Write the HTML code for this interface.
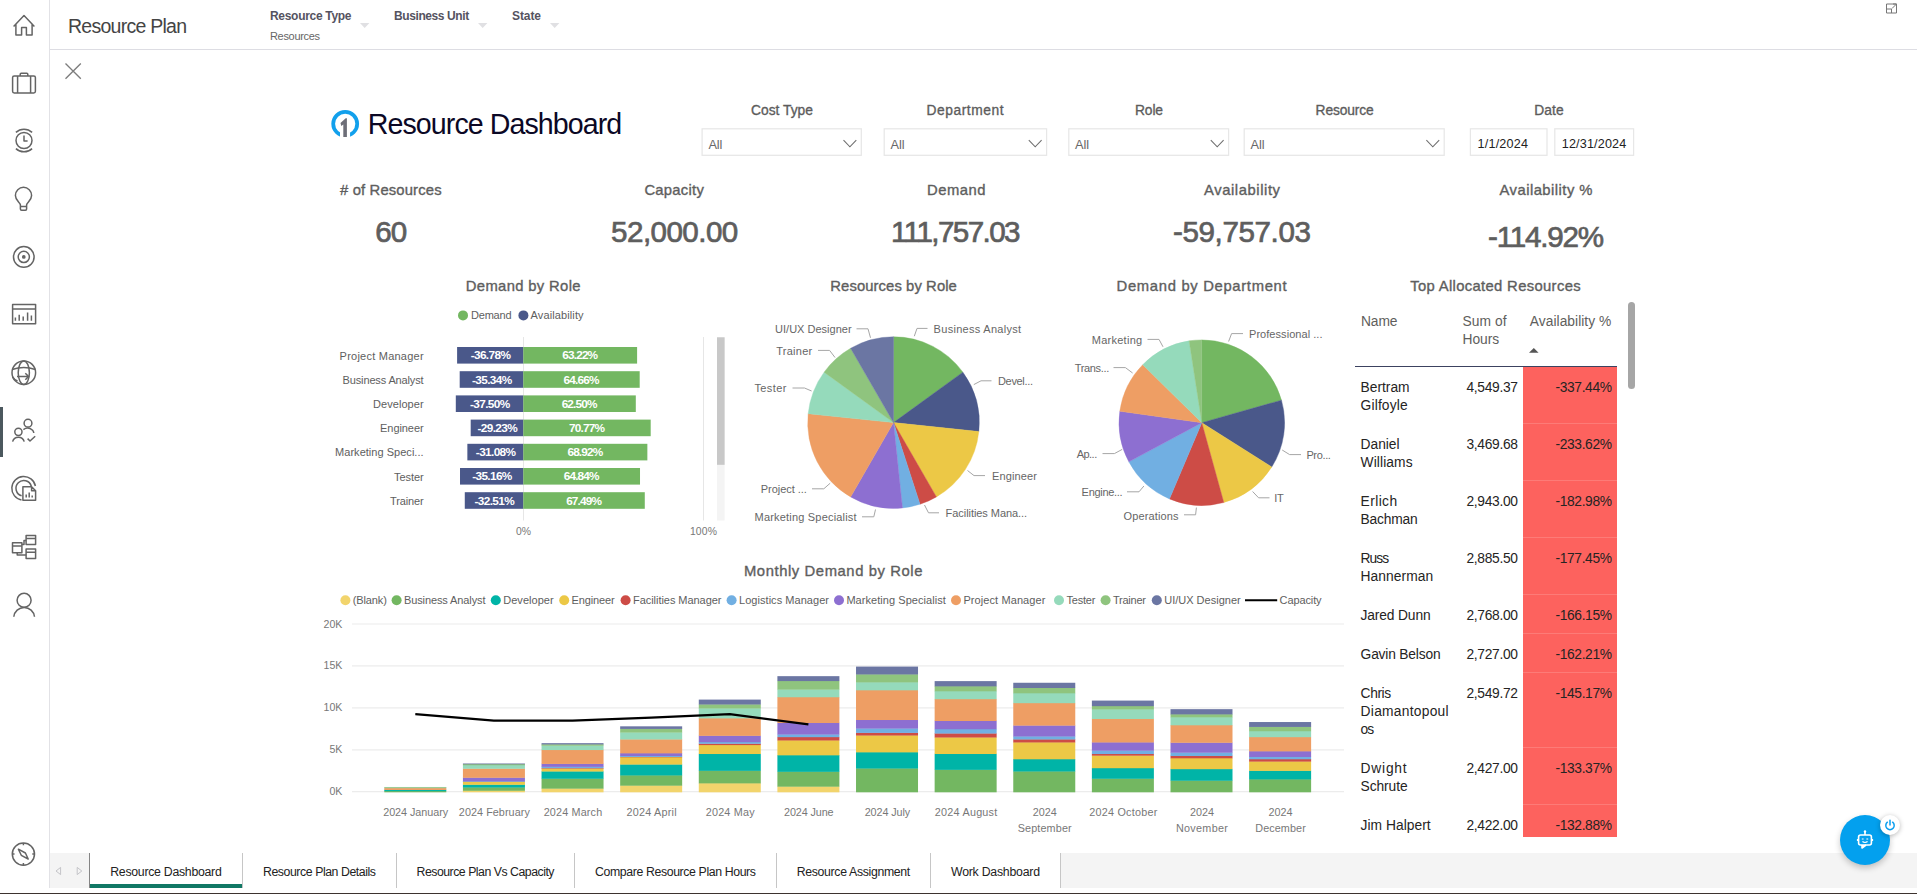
<!DOCTYPE html>
<html><head><meta charset="utf-8"><title>Resource Plan</title>
<style>
html,body{margin:0;padding:0;background:#fff;}
body{width:1917px;height:894px;overflow:hidden;position:relative;font-family:"Liberation Sans",sans-serif;}
.t{position:absolute;white-space:nowrap;display:block;z-index:2;}
.b{position:absolute;box-sizing:border-box;}
svg{position:absolute;left:0;top:0;overflow:visible;}
</style></head><body>
<div class="b" style="left:49px;top:0px;width:1px;height:888px;background:#e2e2e6;"></div>
<div class="b" style="left:50px;top:49px;width:1867px;height:1px;background:#dddde3;"></div>
<div class="b" style="left:0px;top:407px;width:3px;height:50px;background:#4b585e;"></div>
<svg width="50" height="894" fill="none" stroke="#646464" stroke-width="1.5" stroke-linejoin="round" stroke-linecap="butt"><path d="M13.6 26.4 L24 15.6 L34.4 26.4 M15.9 24.4 V34.9 H21.6 V27.4 H26.4 V34.9 H32.1 V24.4"/><rect x="12.6" y="75.9" width="22.8" height="17" rx="1.6"/><path d="M20.2 75.9 V74.2 Q20.2 73.2 21.2 73.2 H26.8 Q27.8 73.2 27.8 74.2 V75.9 M17.6 75.9 V92.9 M30.6 75.9 V92.9"/><circle cx="24" cy="140.5" r="8"/><path d="M24 135.6 V141 H27.6 M15.9 132.4 A11.7 11.7 0 0 1 32.1 132.4 M15.9 148.6 A11.7 11.7 0 0 0 32.1 148.6"/><path d="M20.4 206.6 V205 C20.4 202.4 15.4 200.6 15.4 195.4 A8.1 8.1 0 0 1 31.6 195.4 C31.6 200.6 26.6 202.4 26.6 205 V206.6 Z M20.4 206.6 V209 Q20.4 210.2 21.6 210.2 H25.4 Q26.6 210.2 26.6 209 V206.6"/><circle cx="23.8" cy="256.9" r="10.3"/><circle cx="23.8" cy="256.9" r="5.6"/><circle cx="23.8" cy="256.9" r="1.1" fill="#666"/><rect x="12.6" y="304.4" width="23" height="19.3"/><path d="M12.6 309 H35.6 M15.4 320.8 V317.5 M19.2 320.8 V314.8 M23.2 320.8 V316.5 M27.6 320.8 V312.5 M31.4 320.8 V315.5"/><circle cx="23.8" cy="372.7" r="11.8"/><ellipse cx="23.8" cy="372.7" rx="5.6" ry="11.8"/><path d="M12.2 369.5 Q23.8 365.5 35.4 369.5 M17 376.5 H28.5 M25.3 373.2 L28.6 376.5 L25.3 379.8 M12.6 376.8 Q14 379.5 17.5 381"/><circle cx="28" cy="423.2" r="3.9"/><circle cx="18.4" cy="431.8" r="3.6"/><path d="M12.6 441.6 A6 6 0 0 1 24.2 441.6 M23.4 429.6 Q28 426.2 32.6 430.2 Q33.6 431.4 33.8 433 M27.6 438.6 L30 441 L35.2 436.2"/><path d="M35.4 486 A11.9 11.9 0 1 0 21.5 500 M31.3 486.2 A7.8 7.8 0 1 0 21.6 495.8"/><path d="M22.9 486.7 H31.6 L35.6 490.7 V500.3 H22.9 Z M31.6 486.7 V490.7 H35.6 M26.2 497.6 V494.6 M29.2 497.6 V492.6 M32.2 497.6 V495.4"/><rect x="12.5" y="542.8" width="9.4" height="10"/><rect x="26.1" y="535.6" width="9.5" height="9"/><rect x="26.1" y="549.1" width="9.5" height="9.3"/><path d="M12.5 546 H21.9 M26.1 538.6 H35.6 M26.1 552.2 H35.6 M21.9 544.4 H24 V540.4 H26.1 M17.2 552.8 V555 H26.1"/><circle cx="24.1" cy="600.3" r="7"/><path d="M13.8 616.8 A10.4 10.4 0 0 1 34.5 616.8"/><circle cx="23.4" cy="854.1" r="11.1"/><path d="M18.4 849.2 L25.4 853 L28.2 859 L21.3 855.3 Z M23.4 843 V845.2 M23.4 863 V865.2 M12.3 854.1 H14.5 M32.3 854.1 H34.5"/></svg>
<span class="t" style="left:68.00px;top:13.74px;font-size:19.5px;line-height:25px;color:#444;letter-spacing:-0.742px;">Resource Plan</span>
<span class="t" style="left:270.00px;top:7.84px;font-size:12px;line-height:16px;color:#55535f;font-weight:700;letter-spacing:-0.304px;">Resource Type</span>
<span class="t" style="left:270.00px;top:29.19px;font-size:11px;line-height:14px;color:#666;letter-spacing:-0.322px;">Resources</span>
<span class="t" style="left:394.00px;top:7.84px;font-size:12px;line-height:16px;color:#55535f;font-weight:700;letter-spacing:-0.401px;">Business Unit</span>
<span class="t" style="left:512.00px;top:7.84px;font-size:12px;line-height:16px;color:#55535f;font-weight:700;letter-spacing:-0.086px;">State</span>
<svg width="1917" height="60"><path d="M360 23 h9.4 l-4.7 5 z M478 23 h9.4 l-4.7 5 z M550 23 h9.4 l-4.7 5 z" fill="#e0e0e3"/><path d="M1886.5 4 H1896.5 V13 H1886.5 Z M1886.5 9 H1891.5 V13 M1892 8.5 L1896.3 4.2 M1893 4 H1896.5 V7.5" fill="none" stroke="#777" stroke-width="1"/><path d="M65.5 63.5 L80.8 78.8 M80.8 63.5 L65.5 78.8" stroke="#7d7d7d" stroke-width="1.35" fill="none"/></svg>
<div class="b" style="left:50px;top:853px;width:1867px;height:35px;background:#f4f4f4;"></div>
<div class="b" style="left:89px;top:853px;width:972px;height:35px;background:#fff;border-left:1px solid #858585;"></div>
<div class="b" style="left:90px;top:884px;width:153px;height:4px;background:#117865;"></div>
<div class="b" style="left:242px;top:853px;width:1px;height:35px;background:#c6c6c6;"></div>
<div class="b" style="left:396px;top:853px;width:1px;height:35px;background:#c6c6c6;"></div>
<div class="b" style="left:574px;top:853px;width:1px;height:35px;background:#c6c6c6;"></div>
<div class="b" style="left:776px;top:853px;width:1px;height:35px;background:#c6c6c6;"></div>
<div class="b" style="left:930px;top:853px;width:1px;height:35px;background:#c6c6c6;"></div>
<div class="b" style="left:1060px;top:853px;width:1px;height:35px;background:#c6c6c6;"></div>
<span class="t" style="left:110.25px;top:863.74px;font-size:12.3px;line-height:16px;color:#222;letter-spacing:-0.278px;">Resource Dashboard</span>
<span class="t" style="left:263.00px;top:863.74px;font-size:12.3px;line-height:16px;color:#222;letter-spacing:-0.435px;">Resource Plan Details</span>
<span class="t" style="left:416.50px;top:863.74px;font-size:12.3px;line-height:16px;color:#222;letter-spacing:-0.488px;">Resource Plan Vs Capacity</span>
<span class="t" style="left:595.00px;top:863.74px;font-size:12.3px;line-height:16px;color:#222;letter-spacing:-0.381px;">Compare Resource Plan Hours</span>
<span class="t" style="left:796.75px;top:863.74px;font-size:12.3px;line-height:16px;color:#222;letter-spacing:-0.341px;">Resource Assignment</span>
<span class="t" style="left:951.00px;top:863.74px;font-size:12.3px;line-height:16px;color:#222;letter-spacing:-0.236px;">Work Dashboard</span>
<svg width="120" height="894"><path d="M60.6 867.4 V874.6 L56 871 Z M77.2 867.4 V874.6 L81.8 871 Z" fill="none" stroke="#c4c4c8" stroke-width="1"/></svg>
<div class="b" style="left:0px;top:893px;width:1917px;height:1px;background:#3d332f;"></div>
<div class="b" style="left:1840px;top:815px;width:50px;height:50px;background:#03a0ee;border-radius:50%;box-shadow:0 3px 6px rgba(0,0,0,.22);"></div>
<div class="b" style="left:1880px;top:815px;width:20px;height:20px;background:#fff;border-radius:50%;box-shadow:0 1px 5px rgba(0,0,0,.28);"></div>
<svg width="1917" height="894"><g fill="none" stroke="#fff" stroke-width="1.6" stroke-linejoin="round"><rect x="1858.6" y="835" width="12.8" height="10" rx="2"/><path d="M1865 835 V832" /><path d="M1862 845 V848 L1866 845" fill="#fff"/><path d="M1861.8 839 H1863.6 M1866.4 839 H1868.2 M1862.4 841.6 Q1865 843.4 1867.6 841.6" stroke-width="1.2"/><path d="M1857.6 839 V841 M1872.4 839 V841" stroke-width="1.4"/></g><circle cx="1865" cy="831.5" r="1.2" fill="#fff"/><g fill="none" stroke="#0a9ff0" stroke-width="1.5" stroke-linecap="round"><path d="M1887.4 822.2 A4.2 4.2 0 1 0 1892.6 822.2 M1890 820.2 V825"/></g></svg>
<svg width="1917" height="200"><circle cx="345.2" cy="123.8" r="12" fill="none" stroke="#12a0ec" stroke-width="3.75"/><rect x="340" y="129" width="10.05" height="10" fill="#fff"/><path d="M343.3 136.9 V124.4 L341.3 126.1 L340.5 123 L345.7 118.2 H346.9 V136.9 Z" fill="#6d6e78"/></svg>
<span class="t" style="left:367.80px;top:106.29px;font-size:28.6px;line-height:37px;color:#0b0825;letter-spacing:-0.927px;">Resource Dashboard</span>
<span class="t" style="left:751.00px;top:102.02px;font-size:13.8px;line-height:18px;color:#5c5c5c;-webkit-text-stroke:0.33px #5c5c5c;letter-spacing:0.015px;">Cost Type</span>
<span class="t" style="left:926.50px;top:102.02px;font-size:13.8px;line-height:18px;color:#5c5c5c;-webkit-text-stroke:0.33px #5c5c5c;letter-spacing:0.544px;">Department</span>
<span class="t" style="left:1135.00px;top:102.02px;font-size:13.8px;line-height:18px;color:#5c5c5c;-webkit-text-stroke:0.33px #5c5c5c;letter-spacing:-0.127px;">Role</span>
<span class="t" style="left:1315.60px;top:102.02px;font-size:13.8px;line-height:18px;color:#5c5c5c;-webkit-text-stroke:0.33px #5c5c5c;letter-spacing:-0.152px;">Resource</span>
<span class="t" style="left:1534.25px;top:102.02px;font-size:13.8px;line-height:18px;color:#5c5c5c;-webkit-text-stroke:0.33px #5c5c5c;letter-spacing:0.117px;">Date</span>
<span class="t" style="left:708.40px;top:135.86px;font-size:12.8px;line-height:17px;color:#686868;letter-spacing:-0.113px;">All</span>
<span class="t" style="left:890.50px;top:135.86px;font-size:12.8px;line-height:17px;color:#686868;letter-spacing:-0.113px;">All</span>
<span class="t" style="left:1075.10px;top:135.86px;font-size:12.8px;line-height:17px;color:#686868;letter-spacing:-0.113px;">All</span>
<span class="t" style="left:1250.50px;top:135.86px;font-size:12.8px;line-height:17px;color:#686868;letter-spacing:-0.113px;">All</span>
<svg width="1917" height="200"><g fill="#fff" stroke="#e7e7e7" stroke-width="1.25"><rect x="702.1" y="128.8" width="159.2" height="26.5"/><rect x="884.2" y="128.8" width="162.4" height="26.5"/><rect x="1068.8" y="128.8" width="159.8" height="26.5"/><rect x="1244.2" y="128.8" width="200.0" height="26.5"/><rect x="1470.4" y="128.8" width="76.6" height="26.5"/><rect x="1554.8" y="128.8" width="78.8" height="26.5"/></g><path d="M843.5 140.2 L849.9 146.8 L856.3 140.2 M1028.8 140.2 L1035.2 146.8 L1041.6 140.2 M1210.8 140.2 L1217.2 146.8 L1223.6 140.2 M1426.4 140.2 L1432.8 146.8 L1439.2 140.2" fill="none" stroke="#707070" stroke-width="1.1"/></svg>
<span class="t" style="left:1477.50px;top:135.93px;font-size:12.6px;line-height:16px;color:#222;letter-spacing:0.208px;">1/1/2024</span>
<span class="t" style="left:1561.80px;top:135.93px;font-size:12.6px;line-height:16px;color:#222;letter-spacing:0.160px;">12/31/2024</span>
<span class="t" style="left:340.05px;top:180.57px;font-size:14.8px;line-height:19px;color:#5e5e5e;-webkit-text-stroke:0.36px #5e5e5e;letter-spacing:0.151px;"># of Resources</span>
<span class="t" style="left:644.40px;top:180.57px;font-size:14.8px;line-height:19px;color:#5e5e5e;-webkit-text-stroke:0.36px #5e5e5e;letter-spacing:0.260px;">Capacity</span>
<span class="t" style="left:926.95px;top:180.57px;font-size:14.8px;line-height:19px;color:#5e5e5e;-webkit-text-stroke:0.36px #5e5e5e;letter-spacing:0.512px;">Demand</span>
<span class="t" style="left:1204.00px;top:180.57px;font-size:14.8px;line-height:19px;color:#5e5e5e;-webkit-text-stroke:0.36px #5e5e5e;letter-spacing:0.577px;">Availability</span>
<span class="t" style="left:1499.50px;top:180.57px;font-size:14.8px;line-height:19px;color:#5e5e5e;-webkit-text-stroke:0.36px #5e5e5e;letter-spacing:0.468px;">Availability %</span>
<span class="t" style="left:375.20px;top:212.74px;font-size:29.6px;line-height:38px;color:#5e5e5e;-webkit-text-stroke:0.71px #5e5e5e;letter-spacing:-0.924px;">60</span>
<span class="t" style="left:611.10px;top:212.74px;font-size:29.6px;line-height:38px;color:#5e5e5e;-webkit-text-stroke:0.71px #5e5e5e;letter-spacing:-0.560px;">52,000.00</span>
<span class="t" style="left:891.00px;top:212.74px;font-size:29.6px;line-height:38px;color:#5e5e5e;-webkit-text-stroke:0.71px #5e5e5e;letter-spacing:-1.572px;">111,757.03</span>
<span class="t" style="left:1173.00px;top:212.74px;font-size:29.6px;line-height:38px;color:#5e5e5e;-webkit-text-stroke:0.71px #5e5e5e;letter-spacing:-0.393px;">-59,757.03</span>
<span class="t" style="left:1488.00px;top:217.74px;font-size:29.6px;line-height:38px;color:#5e5e5e;-webkit-text-stroke:0.71px #5e5e5e;letter-spacing:-1.216px;">-114.92%</span>
<span class="t" style="left:465.85px;top:276.57px;font-size:14.8px;line-height:19px;color:#5e5e5e;-webkit-text-stroke:0.36px #5e5e5e;letter-spacing:0.343px;">Demand by Role</span>
<span class="t" style="left:471.00px;top:308.49px;font-size:11px;line-height:14px;color:#5e5e5e;letter-spacing:-0.216px;">Demand</span>
<span class="t" style="left:530.60px;top:308.49px;font-size:11px;line-height:14px;color:#5e5e5e;letter-spacing:0.112px;">Availability</span>
<span class="t" style="left:339.60px;top:348.69px;font-size:11px;line-height:14px;color:#5e5e5e;letter-spacing:0.235px;">Project Manager</span>
<span class="t" style="left:470.70px;top:348.41px;font-size:11.8px;line-height:15px;color:#fff;font-weight:700;letter-spacing:-0.625px;">-36.78%</span>
<span class="t" style="left:562.30px;top:348.41px;font-size:11.8px;line-height:15px;color:#fff;font-weight:700;letter-spacing:-0.844px;">63.22%</span>
<span class="t" style="left:342.60px;top:372.89px;font-size:11px;line-height:14px;color:#5e5e5e;letter-spacing:-0.144px;">Business Analyst</span>
<span class="t" style="left:471.99px;top:372.61px;font-size:11.8px;line-height:15px;color:#fff;font-weight:700;letter-spacing:-0.625px;">-35.34%</span>
<span class="t" style="left:563.59px;top:372.61px;font-size:11.8px;line-height:15px;color:#fff;font-weight:700;letter-spacing:-0.844px;">64.66%</span>
<span class="t" style="left:373.10px;top:397.09px;font-size:11px;line-height:14px;color:#5e5e5e;letter-spacing:0.045px;">Developer</span>
<span class="t" style="left:470.05px;top:396.81px;font-size:11.8px;line-height:15px;color:#fff;font-weight:700;letter-spacing:-0.625px;">-37.50%</span>
<span class="t" style="left:561.65px;top:396.81px;font-size:11.8px;line-height:15px;color:#fff;font-weight:700;letter-spacing:-0.844px;">62.50%</span>
<span class="t" style="left:380.10px;top:421.29px;font-size:11px;line-height:14px;color:#5e5e5e;letter-spacing:-0.076px;">Engineer</span>
<span class="t" style="left:477.49px;top:421.01px;font-size:11.8px;line-height:15px;color:#fff;font-weight:700;letter-spacing:-0.625px;">-29.23%</span>
<span class="t" style="left:569.09px;top:421.01px;font-size:11.8px;line-height:15px;color:#fff;font-weight:700;letter-spacing:-0.844px;">70.77%</span>
<span class="t" style="left:335.10px;top:445.49px;font-size:11px;line-height:14px;color:#5e5e5e;letter-spacing:0.027px;">Marketing Speci...</span>
<span class="t" style="left:475.83px;top:445.21px;font-size:11.8px;line-height:15px;color:#fff;font-weight:700;letter-spacing:-0.625px;">-31.08%</span>
<span class="t" style="left:567.43px;top:445.21px;font-size:11.8px;line-height:15px;color:#fff;font-weight:700;letter-spacing:-0.844px;">68.92%</span>
<span class="t" style="left:394.10px;top:469.69px;font-size:11px;line-height:14px;color:#5e5e5e;letter-spacing:-0.091px;">Tester</span>
<span class="t" style="left:472.16px;top:469.41px;font-size:11.8px;line-height:15px;color:#fff;font-weight:700;letter-spacing:-0.625px;">-35.16%</span>
<span class="t" style="left:563.76px;top:469.41px;font-size:11.8px;line-height:15px;color:#fff;font-weight:700;letter-spacing:-0.844px;">64.84%</span>
<span class="t" style="left:390.10px;top:493.89px;font-size:11px;line-height:14px;color:#5e5e5e;letter-spacing:-0.156px;">Trainer</span>
<span class="t" style="left:474.54px;top:493.61px;font-size:11.8px;line-height:15px;color:#fff;font-weight:700;letter-spacing:-0.625px;">-32.51%</span>
<span class="t" style="left:566.14px;top:493.61px;font-size:11.8px;line-height:15px;color:#fff;font-weight:700;letter-spacing:-0.844px;">67.49%</span>
<svg width="1917" height="894"><circle cx="463" cy="315.4" r="5" fill="#73b761"/><circle cx="523.4" cy="315.4" r="5" fill="#4a588a"/><path d="M523.5 337 V520.5 M703.5 337 V520.5" stroke="#e6e6e6" stroke-width="1"/><rect x="717" y="337.3" width="7.6" height="183.2" fill="#f4f4f4"/><rect x="717" y="337.3" width="7.6" height="127.5" fill="#c8c8c8"/><rect x="457.10" y="347.00" width="66.20" height="16.6" fill="#4a588a"/><rect x="523.30" y="347.00" width="113.80" height="16.6" fill="#73b761"/><rect x="459.69" y="371.20" width="63.61" height="16.6" fill="#4a588a"/><rect x="523.30" y="371.20" width="116.39" height="16.6" fill="#73b761"/><rect x="455.80" y="395.40" width="67.50" height="16.6" fill="#4a588a"/><rect x="523.30" y="395.40" width="112.50" height="16.6" fill="#73b761"/><rect x="470.69" y="419.60" width="52.61" height="16.6" fill="#4a588a"/><rect x="523.30" y="419.60" width="127.39" height="16.6" fill="#73b761"/><rect x="467.36" y="443.80" width="55.94" height="16.6" fill="#4a588a"/><rect x="523.30" y="443.80" width="124.06" height="16.6" fill="#73b761"/><rect x="460.01" y="468.00" width="63.29" height="16.6" fill="#4a588a"/><rect x="523.30" y="468.00" width="116.71" height="16.6" fill="#73b761"/><rect x="464.78" y="492.20" width="58.52" height="16.6" fill="#4a588a"/><rect x="523.30" y="492.20" width="121.48" height="16.6" fill="#73b761"/></svg>
<span class="t" style="left:515.88px;top:524.80px;font-size:10.4px;line-height:14px;color:#777;">0%</span>
<span class="t" style="left:689.90px;top:524.80px;font-size:10.4px;line-height:14px;color:#777;letter-spacing:0.134px;">100%</span>
<span class="t" style="left:830.35px;top:276.57px;font-size:14.8px;line-height:19px;color:#5e5e5e;-webkit-text-stroke:0.36px #5e5e5e;letter-spacing:0.092px;">Resources by Role</span>
<span class="t" style="left:1116.60px;top:276.57px;font-size:14.8px;line-height:19px;color:#5e5e5e;-webkit-text-stroke:0.36px #5e5e5e;letter-spacing:0.678px;">Demand by Department</span>
<svg width="1917" height="894"><path d="M893.5 422.6 L893.50 336.80 A85.8 85.8 0 0 1 962.91 372.17 Z" fill="#73b761" stroke="#73b761" stroke-width="0.4"/><path d="M893.5 422.6 L962.91 372.17 A85.8 85.8 0 0 1 978.83 431.57 Z" fill="#4a588a" stroke="#4a588a" stroke-width="0.4"/><path d="M893.5 422.6 L978.83 431.57 A85.8 85.8 0 0 1 936.40 496.90 Z" fill="#ecc846" stroke="#ecc846" stroke-width="0.4"/><path d="M893.5 422.6 L936.40 496.90 A85.8 85.8 0 0 1 920.01 504.20 Z" fill="#cd4c46" stroke="#cd4c46" stroke-width="0.4"/><path d="M893.5 422.6 L920.01 504.20 A85.8 85.8 0 0 1 902.47 507.93 Z" fill="#71afe2" stroke="#71afe2" stroke-width="0.4"/><path d="M893.5 422.6 L902.47 507.93 A85.8 85.8 0 0 1 850.60 496.90 Z" fill="#8d6fd1" stroke="#8d6fd1" stroke-width="0.4"/><path d="M893.5 422.6 L850.60 496.90 A85.8 85.8 0 0 1 808.17 413.63 Z" fill="#ee9e64" stroke="#ee9e64" stroke-width="0.4"/><path d="M893.5 422.6 L808.17 413.63 A85.8 85.8 0 0 1 824.09 372.17 Z" fill="#95dabb" stroke="#95dabb" stroke-width="0.4"/><path d="M893.5 422.6 L824.09 372.17 A85.8 85.8 0 0 1 850.60 348.30 Z" fill="#8fc47e" stroke="#8fc47e" stroke-width="0.4"/><path d="M893.5 422.6 L850.60 348.30 A85.8 85.8 0 0 1 893.50 336.80 Z" fill="#6b76a3" stroke="#6b76a3" stroke-width="0.4"/><path d="M1201.8 422.7 L1201.80 339.90 A82.8 82.8 0 0 1 1281.47 400.16 Z" fill="#73b761" stroke="#73b761" stroke-width="0.4"/><path d="M1201.8 422.7 L1281.47 400.16 A82.8 82.8 0 0 1 1271.79 466.94 Z" fill="#4a588a" stroke="#4a588a" stroke-width="0.4"/><path d="M1201.8 422.7 L1271.79 466.94 A82.8 82.8 0 0 1 1223.79 502.53 Z" fill="#ecc846" stroke="#ecc846" stroke-width="0.4"/><path d="M1201.8 422.7 L1223.79 502.53 A82.8 82.8 0 0 1 1169.45 498.92 Z" fill="#cd4c46" stroke="#cd4c46" stroke-width="0.4"/><path d="M1201.8 422.7 L1169.45 498.92 A82.8 82.8 0 0 1 1128.83 461.83 Z" fill="#71afe2" stroke="#71afe2" stroke-width="0.4"/><path d="M1201.8 422.7 L1128.83 461.83 A82.8 82.8 0 0 1 1119.81 411.18 Z" fill="#8d6fd1" stroke="#8d6fd1" stroke-width="0.4"/><path d="M1201.8 422.7 L1119.81 411.18 A82.8 82.8 0 0 1 1142.74 364.66 Z" fill="#ee9e64" stroke="#ee9e64" stroke-width="0.4"/><path d="M1201.8 422.7 L1142.74 364.66 A82.8 82.8 0 0 1 1189.13 340.87 Z" fill="#95dabb" stroke="#95dabb" stroke-width="0.4"/><path d="M1201.8 422.7 L1189.13 340.87 A82.8 82.8 0 0 1 1201.80 339.90 Z" fill="#8fc47e" stroke="#8fc47e" stroke-width="0.4"/><path d="M914.3 336.2 L917 328.4 H927.5 M973.8 384.6 L981 380.8 H991.5 M967.5 470.5 L974 475.6 H985 M924.5 505 L928.5 512.8 H939 M875.5 509.5 L873.8 516.8 H862 M830.2 483.2 L823.8 488.8 H812 M811.6 391 L804.5 388 H792.5 M835 357.5 L829.6 350.4 H818 M870.5 337.8 L868 328.8 H856.5 M1228.6 341.5 L1231.6 333.6 H1243 M1282.2 450 L1289.6 454.6 H1301 M1252.6 491.5 L1258.6 497.8 H1269.5 M1196.4 507.6 L1195.6 514.8 H1184 M1143.9 486 L1139 491.8 H1127 M1122.2 449.4 L1114.4 453.6 H1102.5 M1132.6 373 L1125.4 367.6 H1113.5 M1163 346.8 L1159 339.4 H1147.5" fill="none" stroke="#a6a6a6" stroke-width="1"/></svg>
<span class="t" style="left:933.60px;top:322.19px;font-size:11px;line-height:14px;color:#666;letter-spacing:0.290px;">Business Analyst</span>
<span class="t" style="left:998.00px;top:374.49px;font-size:11px;line-height:14px;color:#666;letter-spacing:-0.327px;">Devel...</span>
<span class="t" style="left:992.00px;top:469.19px;font-size:11px;line-height:14px;color:#666;letter-spacing:0.138px;">Engineer</span>
<span class="t" style="left:945.60px;top:506.09px;font-size:11px;line-height:14px;color:#666;letter-spacing:-0.060px;">Facilities Mana...</span>
<span class="t" style="left:754.60px;top:510.19px;font-size:11px;line-height:14px;color:#666;letter-spacing:0.188px;">Marketing Specialist</span>
<span class="t" style="left:760.80px;top:482.19px;font-size:11px;line-height:14px;color:#666;letter-spacing:-0.046px;">Project ...</span>
<span class="t" style="left:754.40px;top:381.39px;font-size:11px;line-height:14px;color:#666;letter-spacing:0.409px;">Tester</span>
<span class="t" style="left:776.20px;top:344.19px;font-size:11px;line-height:14px;color:#666;letter-spacing:0.261px;">Trainer</span>
<span class="t" style="left:775.10px;top:322.19px;font-size:11px;line-height:14px;color:#666;letter-spacing:0.007px;">UI/UX Designer</span>
<span class="t" style="left:1249.00px;top:327.19px;font-size:11px;line-height:14px;color:#666;letter-spacing:0.050px;">Professional ...</span>
<span class="t" style="left:1306.40px;top:448.19px;font-size:11px;line-height:14px;color:#666;letter-spacing:-0.357px;">Pro...</span>
<span class="t" style="left:1274.20px;top:491.19px;font-size:11px;line-height:14px;color:#666;letter-spacing:-0.275px;">IT</span>
<span class="t" style="left:1123.60px;top:509.19px;font-size:11px;line-height:14px;color:#666;letter-spacing:0.132px;">Operations</span>
<span class="t" style="left:1081.60px;top:485.19px;font-size:11px;line-height:14px;color:#666;letter-spacing:-0.303px;">Engine...</span>
<span class="t" style="left:1076.70px;top:447.19px;font-size:11px;line-height:14px;color:#666;letter-spacing:-0.531px;">Ap...</span>
<span class="t" style="left:1074.70px;top:361.19px;font-size:11px;line-height:14px;color:#666;letter-spacing:-0.340px;">Trans...</span>
<span class="t" style="left:1091.70px;top:333.19px;font-size:11px;line-height:14px;color:#666;letter-spacing:0.275px;">Marketing</span>
<span class="t" style="left:743.95px;top:561.57px;font-size:14.8px;line-height:19px;color:#5e5e5e;-webkit-text-stroke:0.36px #5e5e5e;letter-spacing:0.587px;">Monthly Demand by Role</span>
<span class="t" style="left:352.80px;top:593.29px;font-size:11px;line-height:14px;color:#5e5e5e;letter-spacing:-0.140px;">(Blank)</span>
<span class="t" style="left:404.00px;top:593.29px;font-size:11px;line-height:14px;color:#5e5e5e;letter-spacing:-0.110px;">Business Analyst</span>
<span class="t" style="left:503.20px;top:593.29px;font-size:11px;line-height:14px;color:#5e5e5e;letter-spacing:0.045px;">Developer</span>
<span class="t" style="left:571.60px;top:593.29px;font-size:11px;line-height:14px;color:#5e5e5e;letter-spacing:-0.148px;">Engineer</span>
<span class="t" style="left:633.00px;top:593.29px;font-size:11px;line-height:14px;color:#5e5e5e;letter-spacing:-0.045px;">Facilities Manager</span>
<span class="t" style="left:739.00px;top:593.29px;font-size:11px;line-height:14px;color:#5e5e5e;letter-spacing:0.046px;">Logistics Manager</span>
<span class="t" style="left:846.40px;top:593.29px;font-size:11px;line-height:14px;color:#5e5e5e;letter-spacing:0.056px;">Marketing Specialist</span>
<span class="t" style="left:963.40px;top:593.29px;font-size:11px;line-height:14px;color:#5e5e5e;letter-spacing:0.092px;">Project Manager</span>
<span class="t" style="left:1066.40px;top:593.29px;font-size:11px;line-height:14px;color:#5e5e5e;letter-spacing:-0.191px;">Tester</span>
<span class="t" style="left:1113.00px;top:593.29px;font-size:11px;line-height:14px;color:#5e5e5e;letter-spacing:-0.239px;">Trainer</span>
<span class="t" style="left:1164.20px;top:593.29px;font-size:11px;line-height:14px;color:#5e5e5e;letter-spacing:0.007px;">UI/UX Designer</span>
<span class="t" style="left:1279.60px;top:593.29px;font-size:11px;line-height:14px;color:#5e5e5e;letter-spacing:-0.114px;">Capacity</span>
<span class="t" style="left:329.43px;top:784.23px;font-size:10.6px;line-height:14px;color:#777;">0K</span>
<span class="t" style="left:329.43px;top:742.30px;font-size:10.6px;line-height:14px;color:#777;">5K</span>
<span class="t" style="left:323.54px;top:700.37px;font-size:10.6px;line-height:14px;color:#777;">10K</span>
<span class="t" style="left:323.54px;top:658.44px;font-size:10.6px;line-height:14px;color:#777;">15K</span>
<span class="t" style="left:323.54px;top:616.51px;font-size:10.6px;line-height:14px;color:#777;">20K</span>
<svg width="1917" height="894"><circle cx="345.4" cy="600.2" r="5" fill="#f2d46c"/><circle cx="396.6" cy="600.2" r="5" fill="#73b761"/><circle cx="495.8" cy="600.2" r="5" fill="#00b4a7"/><circle cx="564.2" cy="600.2" r="5" fill="#ecc846"/><circle cx="625.6" cy="600.2" r="5" fill="#cd4c46"/><circle cx="731.6" cy="600.2" r="5" fill="#71afe2"/><circle cx="839" cy="600.2" r="5" fill="#8d6fd1"/><circle cx="956" cy="600.2" r="5" fill="#ee9e64"/><circle cx="1059" cy="600.2" r="5" fill="#95dabb"/><circle cx="1105.6" cy="600.2" r="5" fill="#8fc47e"/><circle cx="1156.8" cy="600.2" r="5" fill="#6b76a3"/><path d="M1245 600.2 H1277.2" stroke="#000" stroke-width="2"/><path d="M352 791.7 H1344" stroke="#ececec" stroke-width="1.2"/><path d="M352 749.8 H1344" stroke="#ececec" stroke-width="1.2"/><path d="M352 707.8 H1344" stroke="#ececec" stroke-width="1.2"/><path d="M352 665.9 H1344" stroke="#ececec" stroke-width="1.2"/><path d="M352 624.0 H1344" stroke="#ececec" stroke-width="1.2"/><rect x="384.30" y="790.84" width="62" height="1.46" fill="#73b761"/><rect x="384.30" y="789.69" width="62" height="1.46" fill="#00b4a7"/><rect x="384.30" y="787.87" width="62" height="2.12" fill="#ee9e64"/><rect x="384.30" y="787.38" width="62" height="0.80" fill="#95dabb"/><rect x="384.30" y="786.98" width="62" height="0.70" fill="#8fc47e"/><rect x="462.92" y="790.48" width="62" height="1.82" fill="#f2d46c"/><rect x="462.92" y="787.21" width="62" height="3.57" fill="#73b761"/><rect x="462.92" y="784.48" width="62" height="3.04" fill="#00b4a7"/><rect x="462.92" y="781.67" width="62" height="3.11" fill="#ecc846"/><rect x="462.92" y="781.41" width="62" height="0.56" fill="#cd4c46"/><rect x="462.92" y="780.91" width="62" height="0.80" fill="#71afe2"/><rect x="462.92" y="777.48" width="62" height="3.73" fill="#8d6fd1"/><rect x="462.92" y="768.47" width="62" height="9.31" fill="#ee9e64"/><rect x="462.92" y="764.97" width="62" height="3.80" fill="#95dabb"/><rect x="462.92" y="763.98" width="62" height="1.29" fill="#8fc47e"/><rect x="462.92" y="763.49" width="62" height="0.80" fill="#6b76a3"/><rect x="541.54" y="788.37" width="62" height="3.93" fill="#f2d46c"/><rect x="541.54" y="778.47" width="62" height="10.20" fill="#73b761"/><rect x="541.54" y="771.21" width="62" height="7.56" fill="#00b4a7"/><rect x="541.54" y="768.24" width="62" height="3.27" fill="#ecc846"/><rect x="541.54" y="767.91" width="62" height="0.63" fill="#cd4c46"/><rect x="541.54" y="766.59" width="62" height="1.62" fill="#71afe2"/><rect x="541.54" y="763.62" width="62" height="3.27" fill="#8d6fd1"/><rect x="541.54" y="749.76" width="62" height="14.16" fill="#ee9e64"/><rect x="541.54" y="745.47" width="62" height="4.59" fill="#95dabb"/><rect x="541.54" y="744.15" width="62" height="1.62" fill="#8fc47e"/><rect x="541.54" y="743.16" width="62" height="1.29" fill="#6b76a3"/><rect x="620.16" y="785.40" width="62" height="6.90" fill="#f2d46c"/><rect x="620.16" y="775.17" width="62" height="10.53" fill="#73b761"/><rect x="620.16" y="764.28" width="62" height="11.19" fill="#00b4a7"/><rect x="620.16" y="757.02" width="62" height="7.56" fill="#ecc846"/><rect x="620.16" y="756.69" width="62" height="0.63" fill="#cd4c46"/><rect x="620.16" y="755.70" width="62" height="1.29" fill="#71afe2"/><rect x="620.16" y="753.06" width="62" height="2.94" fill="#8d6fd1"/><rect x="620.16" y="739.19" width="62" height="14.16" fill="#ee9e64"/><rect x="620.16" y="732.26" width="62" height="7.23" fill="#95dabb"/><rect x="620.16" y="728.63" width="62" height="3.93" fill="#8fc47e"/><rect x="620.16" y="726.32" width="62" height="2.61" fill="#6b76a3"/><rect x="698.78" y="783.09" width="62" height="9.21" fill="#f2d46c"/><rect x="698.78" y="770.55" width="62" height="12.84" fill="#73b761"/><rect x="698.78" y="753.72" width="62" height="17.13" fill="#00b4a7"/><rect x="698.78" y="744.81" width="62" height="9.21" fill="#ecc846"/><rect x="698.78" y="743.49" width="62" height="1.62" fill="#cd4c46"/><rect x="698.78" y="741.83" width="62" height="1.95" fill="#71afe2"/><rect x="698.78" y="735.56" width="62" height="6.57" fill="#8d6fd1"/><rect x="698.78" y="718.07" width="62" height="17.79" fill="#ee9e64"/><rect x="698.78" y="708.17" width="62" height="10.20" fill="#95dabb"/><rect x="698.78" y="704.21" width="62" height="4.26" fill="#8fc47e"/><rect x="698.78" y="699.59" width="62" height="4.92" fill="#6b76a3"/><rect x="777.40" y="786.39" width="62" height="5.91" fill="#f2d46c"/><rect x="777.40" y="771.54" width="62" height="15.15" fill="#73b761"/><rect x="777.40" y="755.04" width="62" height="16.80" fill="#00b4a7"/><rect x="777.40" y="740.18" width="62" height="15.15" fill="#ecc846"/><rect x="777.40" y="736.88" width="62" height="3.60" fill="#cd4c46"/><rect x="777.40" y="734.24" width="62" height="2.94" fill="#71afe2"/><rect x="777.40" y="722.69" width="62" height="11.85" fill="#8d6fd1"/><rect x="777.40" y="696.95" width="62" height="26.04" fill="#ee9e64"/><rect x="777.40" y="689.36" width="62" height="7.89" fill="#95dabb"/><rect x="777.40" y="680.78" width="62" height="8.88" fill="#8fc47e"/><rect x="777.40" y="676.16" width="62" height="4.92" fill="#6b76a3"/><rect x="856.02" y="768.24" width="62" height="24.06" fill="#73b761"/><rect x="856.02" y="752.07" width="62" height="16.47" fill="#00b4a7"/><rect x="856.02" y="735.23" width="62" height="17.13" fill="#ecc846"/><rect x="856.02" y="732.59" width="62" height="2.94" fill="#cd4c46"/><rect x="856.02" y="728.30" width="62" height="4.59" fill="#71afe2"/><rect x="856.02" y="719.72" width="62" height="8.88" fill="#8d6fd1"/><rect x="856.02" y="690.02" width="62" height="30.00" fill="#ee9e64"/><rect x="856.02" y="682.10" width="62" height="8.22" fill="#95dabb"/><rect x="856.02" y="674.18" width="62" height="8.22" fill="#8fc47e"/><rect x="856.02" y="666.59" width="62" height="7.89" fill="#6b76a3"/><rect x="934.64" y="769.56" width="62" height="22.74" fill="#73b761"/><rect x="934.64" y="753.72" width="62" height="16.14" fill="#00b4a7"/><rect x="934.64" y="737.21" width="62" height="16.80" fill="#ecc846"/><rect x="934.64" y="733.25" width="62" height="4.26" fill="#cd4c46"/><rect x="934.64" y="728.96" width="62" height="4.59" fill="#71afe2"/><rect x="934.64" y="720.71" width="62" height="8.55" fill="#8d6fd1"/><rect x="934.64" y="698.93" width="62" height="22.08" fill="#ee9e64"/><rect x="934.64" y="691.01" width="62" height="8.22" fill="#95dabb"/><rect x="934.64" y="686.06" width="62" height="5.25" fill="#8fc47e"/><rect x="934.64" y="681.11" width="62" height="5.25" fill="#6b76a3"/><rect x="1013.26" y="771.21" width="62" height="21.09" fill="#73b761"/><rect x="1013.26" y="759.00" width="62" height="12.51" fill="#00b4a7"/><rect x="1013.26" y="742.17" width="62" height="17.13" fill="#ecc846"/><rect x="1013.26" y="739.19" width="62" height="3.27" fill="#cd4c46"/><rect x="1013.26" y="736.22" width="62" height="3.27" fill="#71afe2"/><rect x="1013.26" y="725.33" width="62" height="11.19" fill="#8d6fd1"/><rect x="1013.26" y="702.89" width="62" height="22.74" fill="#ee9e64"/><rect x="1013.26" y="692.99" width="62" height="10.20" fill="#95dabb"/><rect x="1013.26" y="687.71" width="62" height="5.58" fill="#8fc47e"/><rect x="1013.26" y="682.76" width="62" height="5.25" fill="#6b76a3"/><rect x="1091.88" y="778.47" width="62" height="13.83" fill="#73b761"/><rect x="1091.88" y="767.91" width="62" height="10.86" fill="#00b4a7"/><rect x="1091.88" y="755.37" width="62" height="12.84" fill="#ecc846"/><rect x="1091.88" y="753.72" width="62" height="1.95" fill="#cd4c46"/><rect x="1091.88" y="750.42" width="62" height="3.60" fill="#71afe2"/><rect x="1091.88" y="742.17" width="62" height="8.55" fill="#8d6fd1"/><rect x="1091.88" y="718.73" width="62" height="23.73" fill="#ee9e64"/><rect x="1091.88" y="709.16" width="62" height="9.87" fill="#95dabb"/><rect x="1091.88" y="705.86" width="62" height="3.60" fill="#8fc47e"/><rect x="1091.88" y="700.58" width="62" height="5.58" fill="#6b76a3"/><rect x="1170.50" y="780.45" width="62" height="11.85" fill="#73b761"/><rect x="1170.50" y="768.90" width="62" height="11.85" fill="#00b4a7"/><rect x="1170.50" y="758.01" width="62" height="11.19" fill="#ecc846"/><rect x="1170.50" y="755.70" width="62" height="2.61" fill="#cd4c46"/><rect x="1170.50" y="752.40" width="62" height="3.60" fill="#71afe2"/><rect x="1170.50" y="742.50" width="62" height="10.20" fill="#8d6fd1"/><rect x="1170.50" y="725.00" width="62" height="17.79" fill="#ee9e64"/><rect x="1170.50" y="717.08" width="62" height="8.22" fill="#95dabb"/><rect x="1170.50" y="714.11" width="62" height="3.27" fill="#8fc47e"/><rect x="1170.50" y="709.16" width="62" height="5.25" fill="#6b76a3"/><rect x="1249.12" y="779.13" width="62" height="13.17" fill="#73b761"/><rect x="1249.12" y="770.55" width="62" height="8.88" fill="#00b4a7"/><rect x="1249.12" y="761.31" width="62" height="9.54" fill="#ecc846"/><rect x="1249.12" y="759.00" width="62" height="2.61" fill="#cd4c46"/><rect x="1249.12" y="756.69" width="62" height="2.61" fill="#71afe2"/><rect x="1249.12" y="751.08" width="62" height="5.91" fill="#8d6fd1"/><rect x="1249.12" y="736.88" width="62" height="14.49" fill="#ee9e64"/><rect x="1249.12" y="730.94" width="62" height="6.24" fill="#95dabb"/><rect x="1249.12" y="726.65" width="62" height="4.59" fill="#8fc47e"/><rect x="1249.12" y="722.03" width="62" height="4.92" fill="#6b76a3"/><path d="M415.3 714.1 L493.9 720.7 L572.5 720.7 L651.2 717.6 L729.8 714.1 L808.4 724.3" fill="none" stroke="#000" stroke-width="2.2" stroke-linejoin="round"/></svg>
<span class="t" style="left:383.20px;top:805.26px;font-size:10.8px;line-height:14px;color:#777;letter-spacing:-0.041px;">2024 January</span>
<span class="t" style="left:458.82px;top:805.26px;font-size:10.8px;line-height:14px;color:#777;letter-spacing:0.063px;">2024 February</span>
<span class="t" style="left:543.69px;top:805.26px;font-size:10.8px;line-height:14px;color:#777;letter-spacing:0.163px;">2024 March</span>
<span class="t" style="left:626.56px;top:805.26px;font-size:10.8px;line-height:14px;color:#777;letter-spacing:0.218px;">2024 April</span>
<span class="t" style="left:705.68px;top:805.26px;font-size:10.8px;line-height:14px;color:#777;letter-spacing:0.224px;">2024 May</span>
<span class="t" style="left:784.05px;top:805.26px;font-size:10.8px;line-height:14px;color:#777;letter-spacing:-0.118px;">2024 June</span>
<span class="t" style="left:864.67px;top:805.26px;font-size:10.8px;line-height:14px;color:#777;letter-spacing:-0.092px;">2024 July</span>
<span class="t" style="left:934.79px;top:805.26px;font-size:10.8px;line-height:14px;color:#777;letter-spacing:0.245px;">2024 August</span>
<span class="t" style="left:1032.66px;top:805.26px;font-size:10.8px;line-height:14px;color:#777;letter-spacing:-0.009px;">2024</span>
<span class="t" style="left:1017.66px;top:821.46px;font-size:10.8px;line-height:14px;color:#777;letter-spacing:0.146px;">September</span>
<span class="t" style="left:1089.28px;top:805.26px;font-size:10.8px;line-height:14px;color:#777;letter-spacing:0.232px;">2024 October</span>
<span class="t" style="left:1189.90px;top:805.26px;font-size:10.8px;line-height:14px;color:#777;letter-spacing:-0.009px;">2024</span>
<span class="t" style="left:1175.90px;top:821.46px;font-size:10.8px;line-height:14px;color:#777;letter-spacing:0.312px;">November</span>
<span class="t" style="left:1268.52px;top:805.26px;font-size:10.8px;line-height:14px;color:#777;letter-spacing:-0.009px;">2024</span>
<span class="t" style="left:1255.27px;top:821.46px;font-size:10.8px;line-height:14px;color:#777;letter-spacing:0.097px;">December</span>
<span class="t" style="left:1410.15px;top:276.57px;font-size:14.8px;line-height:19px;color:#5e5e5e;-webkit-text-stroke:0.36px #5e5e5e;letter-spacing:0.346px;">Top Allocated Resources</span>
<span class="t" style="left:1361.00px;top:312.82px;font-size:13.8px;line-height:18px;color:#605e5c;letter-spacing:-0.104px;">Name</span>
<span class="t" style="left:1462.60px;top:312.82px;font-size:13.8px;line-height:18px;color:#605e5c;letter-spacing:0.056px;">Sum of</span>
<span class="t" style="left:1462.60px;top:330.82px;font-size:13.8px;line-height:18px;color:#605e5c;letter-spacing:-0.078px;">Hours</span>
<span class="t" style="left:1529.80px;top:312.82px;font-size:13.8px;line-height:18px;color:#605e5c;letter-spacing:0.035px;">Availability %</span>
<svg width="1917" height="894"><path d="M1529 352.8 L1533.8 348 L1538.6 352.8 Z" fill="#555"/></svg>
<div class="b" style="left:1355px;top:366px;width:262px;height:1px;background:#3c4260;"></div>
<div class="b" style="left:1523px;top:367px;width:94px;height:470px;background:#fd625e;"></div>
<span class="t" style="left:1360.60px;top:379.32px;font-size:13.8px;line-height:18px;color:#252423;letter-spacing:-0.013px;">Bertram</span>
<span class="t" style="left:1360.60px;top:397.32px;font-size:13.8px;line-height:18px;color:#252423;letter-spacing:0.141px;">Gilfoyle</span>
<span class="t" style="left:1466.50px;top:379.32px;font-size:13.8px;line-height:18px;color:#252423;letter-spacing:-0.317px;">4,549.37</span>
<span class="t" style="left:1555.50px;top:379.32px;font-size:13.8px;line-height:18px;color:#252423;letter-spacing:-0.368px;">-337.44%</span>
<div class="b" style="left:1523px;top:423px;width:94px;height:1px;background:#fd7b77;"></div>
<span class="t" style="left:1360.60px;top:436.32px;font-size:13.8px;line-height:18px;color:#252423;letter-spacing:-0.025px;">Daniel</span>
<span class="t" style="left:1360.60px;top:454.32px;font-size:13.8px;line-height:18px;color:#252423;letter-spacing:0.091px;">Williams</span>
<span class="t" style="left:1466.50px;top:436.32px;font-size:13.8px;line-height:18px;color:#252423;letter-spacing:-0.317px;">3,469.68</span>
<span class="t" style="left:1555.50px;top:436.32px;font-size:13.8px;line-height:18px;color:#252423;letter-spacing:-0.368px;">-233.62%</span>
<div class="b" style="left:1523px;top:480px;width:94px;height:1px;background:#fd7b77;"></div>
<span class="t" style="left:1360.60px;top:493.32px;font-size:13.8px;line-height:18px;color:#252423;letter-spacing:0.399px;">Erlich</span>
<span class="t" style="left:1360.60px;top:511.32px;font-size:13.8px;line-height:18px;color:#252423;letter-spacing:-0.217px;">Bachman</span>
<span class="t" style="left:1466.50px;top:493.32px;font-size:13.8px;line-height:18px;color:#252423;letter-spacing:-0.317px;">2,943.00</span>
<span class="t" style="left:1555.50px;top:493.32px;font-size:13.8px;line-height:18px;color:#252423;letter-spacing:-0.368px;">-182.98%</span>
<div class="b" style="left:1523px;top:537px;width:94px;height:1px;background:#fd7b77;"></div>
<span class="t" style="left:1360.60px;top:550.32px;font-size:13.8px;line-height:18px;color:#252423;letter-spacing:-0.980px;">Russ</span>
<span class="t" style="left:1360.60px;top:568.32px;font-size:13.8px;line-height:18px;color:#252423;letter-spacing:0.049px;">Hannerman</span>
<span class="t" style="left:1466.50px;top:550.32px;font-size:13.8px;line-height:18px;color:#252423;letter-spacing:-0.317px;">2,885.50</span>
<span class="t" style="left:1555.50px;top:550.32px;font-size:13.8px;line-height:18px;color:#252423;letter-spacing:-0.368px;">-177.45%</span>
<div class="b" style="left:1523px;top:594px;width:94px;height:1px;background:#fd7b77;"></div>
<span class="t" style="left:1360.60px;top:607.32px;font-size:13.8px;line-height:18px;color:#252423;letter-spacing:-0.149px;">Jared Dunn</span>
<span class="t" style="left:1466.50px;top:607.32px;font-size:13.8px;line-height:18px;color:#252423;letter-spacing:-0.317px;">2,768.00</span>
<span class="t" style="left:1555.50px;top:607.32px;font-size:13.8px;line-height:18px;color:#252423;letter-spacing:-0.368px;">-166.15%</span>
<div class="b" style="left:1523px;top:633px;width:94px;height:1px;background:#fd7b77;"></div>
<span class="t" style="left:1360.60px;top:646.32px;font-size:13.8px;line-height:18px;color:#252423;letter-spacing:-0.189px;">Gavin Belson</span>
<span class="t" style="left:1466.50px;top:646.32px;font-size:13.8px;line-height:18px;color:#252423;letter-spacing:-0.317px;">2,727.00</span>
<span class="t" style="left:1555.50px;top:646.32px;font-size:13.8px;line-height:18px;color:#252423;letter-spacing:-0.368px;">-162.21%</span>
<div class="b" style="left:1523px;top:672px;width:94px;height:1px;background:#fd7b77;"></div>
<span class="t" style="left:1360.60px;top:685.32px;font-size:13.8px;line-height:18px;color:#252423;letter-spacing:-0.426px;">Chris</span>
<span class="t" style="left:1360.60px;top:703.32px;font-size:13.8px;line-height:18px;color:#252423;letter-spacing:0.259px;">Diamantopoul</span>
<span class="t" style="left:1360.60px;top:721.32px;font-size:13.8px;line-height:18px;color:#252423;letter-spacing:-1.075px;">os</span>
<span class="t" style="left:1466.50px;top:685.32px;font-size:13.8px;line-height:18px;color:#252423;letter-spacing:-0.317px;">2,549.72</span>
<span class="t" style="left:1555.50px;top:685.32px;font-size:13.8px;line-height:18px;color:#252423;letter-spacing:-0.368px;">-145.17%</span>
<div class="b" style="left:1523px;top:747px;width:94px;height:1px;background:#fd7b77;"></div>
<span class="t" style="left:1360.60px;top:760.32px;font-size:13.8px;line-height:18px;color:#252423;letter-spacing:0.764px;">Dwight</span>
<span class="t" style="left:1360.60px;top:778.32px;font-size:13.8px;line-height:18px;color:#252423;letter-spacing:-0.093px;">Schrute</span>
<span class="t" style="left:1466.50px;top:760.32px;font-size:13.8px;line-height:18px;color:#252423;letter-spacing:-0.317px;">2,427.00</span>
<span class="t" style="left:1555.50px;top:760.32px;font-size:13.8px;line-height:18px;color:#252423;letter-spacing:-0.368px;">-133.37%</span>
<div class="b" style="left:1523px;top:804px;width:94px;height:1px;background:#fd7b77;"></div>
<span class="t" style="left:1360.60px;top:817.32px;font-size:13.8px;line-height:18px;color:#252423;letter-spacing:0.022px;">Jim Halpert</span>
<span class="t" style="left:1466.50px;top:817.32px;font-size:13.8px;line-height:18px;color:#252423;letter-spacing:-0.317px;">2,422.00</span>
<span class="t" style="left:1555.50px;top:817.32px;font-size:13.8px;line-height:18px;color:#252423;letter-spacing:-0.368px;">-132.88%</span>
<div class="b" style="left:1628px;top:301.5px;width:7px;height:87px;background:#a6a6a6;border-radius:3.5px;"></div>
</body></html>
